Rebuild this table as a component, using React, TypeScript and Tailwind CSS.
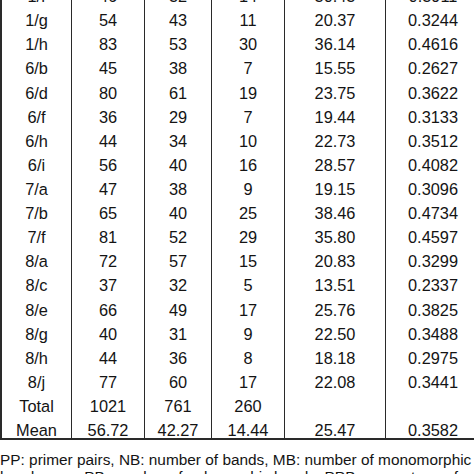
import React from "react";

const rows: string[][] = [
  ["1/f", "46", "32", "14", "30.43", "0.3911"],
  ["1/g", "54", "43", "11", "20.37", "0.3244"],
  ["1/h", "83", "53", "30", "36.14", "0.4616"],
  ["6/b", "45", "38", "7", "15.55", "0.2627"],
  ["6/d", "80", "61", "19", "23.75", "0.3622"],
  ["6/f", "36", "29", "7", "19.44", "0.3133"],
  ["6/h", "44", "34", "10", "22.73", "0.3512"],
  ["6/i", "56", "40", "16", "28.57", "0.4082"],
  ["7/a", "47", "38", "9", "19.15", "0.3096"],
  ["7/b", "65", "40", "25", "38.46", "0.4734"],
  ["7/f", "81", "52", "29", "35.80", "0.4597"],
  ["8/a", "72", "57", "15", "20.83", "0.3299"],
  ["8/c", "37", "32", "5", "13.51", "0.2337"],
  ["8/e", "66", "49", "17", "25.76", "0.3825"],
  ["8/g", "40", "31", "9", "22.50", "0.3488"],
  ["8/h", "44", "36", "8", "18.18", "0.2975"],
  ["8/j", "77", "60", "17", "22.08", "0.3441"],
  ["Total", "1021", "761", "260", "", ""],
  ["Mean", "56.72", "42.27", "14.44", "25.47", "0.3582"],
];

function Row({ cells, last }: { cells: string[]; last?: boolean }) {
  const h = last ? "h-[19.6px]" : "h-[24.12px]";
  return (
    <div className={`flex ${h} leading-[24.12px] overflow-visible`}>
      <div className="w-[70px] shrink-0 text-center border-r border-[#2a2a2a]">{cells[0]}</div>
      <div className="w-[73px] shrink-0 text-center border-r border-[#2a2a2a]">{cells[1]}</div>
      <div className="w-[67px] shrink-0 text-center border-r border-[#2a2a2a]">{cells[2]}</div>
      <div className="w-[73px] shrink-0 text-center border-r border-[#2a2a2a]">{cells[3]}</div>
      <div className="w-[101px] shrink-0 text-center border-r border-[#2a2a2a]">{cells[4]}</div>
      <div className="w-[94px] shrink-0 text-center">{cells[5]}</div>
    </div>
  );
}

export default function App() {
  return (
    <div
      className="w-[474px] h-[474px] overflow-hidden bg-white text-[#141414]"
      style={{ fontFamily: '"Liberation Sans", Arial, sans-serif' }}
    >
      <div className="mt-[-15.85px] w-[480px] border-l-2 border-b-2 border-[#2a2a2a] text-[16.35px]">
        {rows.map((r, i) => (
          <Row key={i} cells={r} last={i === rows.length - 1} />
        ))}
      </div>
      <div className="mt-[11px] text-[15.4px] leading-[17.6px] whitespace-nowrap">
        <div>PP: primer pairs, NB: number of bands, MB: number of monomorphic</div>
        <div>
          bands,<span className="inline-block w-[38px]"></span>PB: number of polymorphic bands, PPB: percentage of polymorphic bands
        </div>
      </div>
    </div>
  );
}
